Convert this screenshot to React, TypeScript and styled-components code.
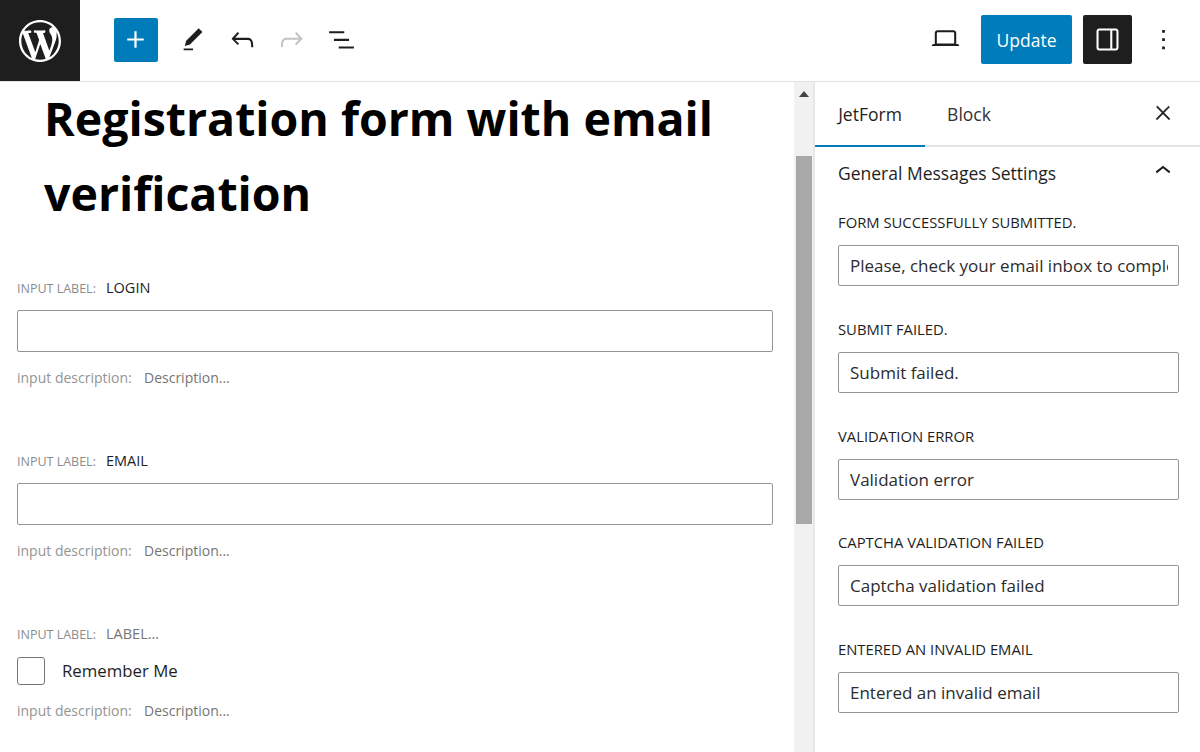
import React from "react";
import styled, { createGlobalStyle } from "styled-components";

const Global = createGlobalStyle`
  html, body { margin: 0; padding: 0; height: 100%; background: #fff; overflow: hidden; }
  #root { height: 100%; }
  * { box-sizing: border-box; }
`;

const FONT = `"Open Sans", "Noto Sans", sans-serif`;

const Page = styled.div`
  width: 1200px;
  height: 752px;
  display: flex;
  flex-direction: column;
  font-family: ${FONT};
  color: #1e1e1e;
  overflow: hidden;
`;
const TopBar = styled.header`
  height: 82px;
  flex: none;
  display: flex;
  align-items: flex-start;
  border-bottom: 1px solid #e3e3e3;
`;
const Logo = styled.div`
  width: 80px;
  height: 81px;
  background: #1e1e1e;
  display: flex;
  align-items: center;
  justify-content: center;
  flex: none;
`;
const ToolGroup = styled.div`
  display: flex;
  align-items: center;
  height: 81px;
  padding-left: 34px;
  gap: 5.6px;
`;
const AddButton = styled.div`
  width: 44px;
  height: 44px;
  margin-top: -2px;
  margin-right: 7px;
  background: #007cba;
  border-radius: 2px;
  display: flex;
  align-items: center;
  justify-content: center;
  padding-right: 2px;
`;
const ToolIcon = styled.div`
  width: 44px;
  height: 44px;
  margin-top: -2px;
  display: flex;
  align-items: center;
  justify-content: center;
`;
const Actions = styled.div`
  margin-left: auto;
  height: 79px;
  display: flex;
  align-items: center;
  padding-right: 15px;
`;
const UpdateButton = styled.div`
  width: 91px;
  height: 49px;
  margin-left: 14px;
  background: #007cba;
  color: #fff;
  border-radius: 2px;
  font-size: 17.5px;
  display: flex;
  align-items: center;
  justify-content: center;
`;
const SidebarToggle = styled.div`
  width: 49px;
  height: 49px;
  margin-left: 11px;
  background: #1e1e1e;
  border-radius: 2px;
  display: flex;
  align-items: center;
  justify-content: center;
`;
const MoreButton = styled.div`
  width: 44px;
  height: 44px;
  margin-left: 9px;
  display: flex;
  align-items: center;
  justify-content: center;
`;
const Body = styled.div`
  flex: 1;
  min-height: 0;
  display: flex;
`;
const Canvas = styled.main`
  width: 794px;
  flex: none;
  padding: 0 21px 0 17px;
`;
const Title = styled.h1`
  margin: -1px 0 47px 27px;
  font-size: 46.5px;
  font-weight: 700;
  line-height: 75px;
  color: #000;
  height: 150px;
  white-space: nowrap;
`;
const FormField = styled.section`
  height: 173px;
`;
const LabelRow = styled.div`
  display: flex;
  align-items: baseline;
  height: 32px;
  line-height: 20px;
`;
const MetaLabel = styled.span`
  width: 89px;
  font-size: 12.5px;
  color: #8c8c8c;
  text-transform: uppercase;
  white-space: nowrap;
`;
const FieldName = styled.span<{ $muted?: boolean }>`
  font-size: 14.5px;
  color: ${(p) => (p.$muted ? "#757575" : "#1e1e1e")};
  text-transform: uppercase;
`;
const InputBox = styled.input`
  display: block;
  width: 100%;
  height: 42px;
  border: 1px solid #949494;
  border-radius: 2px;
  background: #fff;
  outline: none;
`;
const DescRow = styled.div`
  margin-top: 16px;
  display: flex;
  align-items: baseline;
  font-size: 14px;
  line-height: 20px;
`;
const DescLabel = styled.span`
  width: 127px;
  color: #949494;
  white-space: nowrap;
`;
const DescValue = styled.span`
  color: #757575;
`;
const CheckRow = styled.div`
  display: flex;
  align-items: center;
  height: 28px;
  margin-top: 1px;
`;
const CheckBox = styled.div`
  width: 28px;
  height: 28px;
  border: 1px solid #757575;
  border-radius: 3px;
  flex: none;
`;
const CheckText = styled.span`
  margin-left: 17px;
  font-size: 16.8px;
  padding-bottom: 2px;
`;
const ScrollTrack = styled.div`
  width: 21px;
  flex: none;
  background: #f1f1f1;
  border-right: 2px solid #e8e8e8;
  padding: 0 1px 0 2px;
  display: flex;
  flex-direction: column;
  align-items: stretch;
`;
const ScrollArrow = styled.div`
  height: 74px;
  padding-top: 9px;
  display: flex;
  justify-content: center;
`;
const ScrollThumb = styled.div`
  height: 368px;
  background: #a8a8a8;
`;
const Sidebar = styled.aside`
  flex: 1;
  min-width: 0;
`;
const Tabs = styled.div`
  height: 65px;
  display: flex;
  align-items: stretch;
  border-bottom: 2px solid #e5e5e5;
`;
const Tab = styled.div<{ $active?: boolean; $width: number }>`
  width: ${(p) => p.$width}px;
  height: 65px;
  display: flex;
  align-items: center;
  justify-content: center;
  font-size: 17.5px;
  color: ${(p) => (p.$active ? "#1e1e1e" : "#333")};
  border-bottom: 2px solid ${(p) => (p.$active ? "#007cba" : "transparent")};
`;
const CloseButton = styled.div`
  margin-left: auto;
  width: 44px;
  margin-right: 15px;
  display: flex;
  align-items: center;
  justify-content: center;
  padding-bottom: 1px;
  color: #1e1e1e;
`;
const PanelHeader = styled.div`
  height: 54px;
  padding: 0 21px 2px 23px;
  display: flex;
  align-items: center;
  justify-content: space-between;
  font-size: 17.5px;
  font-weight: 500;
`;
const ChevronBox = styled.div`
  display: flex;
  margin-bottom: 4px;
`;
const PanelBody = styled.div`
  padding: 9px 21px 0 23px;
`;
const SettingField = styled.div`
  height: 106.8px;
`;
const SettingLabel = styled.div`
  font-size: 14.8px;
  font-weight: 500;
  line-height: 20px;
  height: 35px;
  padding-top: 2px;
  text-transform: uppercase;
  white-space: nowrap;
`;
const SettingInput = styled.input`
  display: block;
  width: 100%;
  height: 41px;
  border: 1px solid #949494;
  border-radius: 2px;
  padding: 0 10px 0 11px;
  font-family: ${FONT};
  font-size: 17px;
  color: #2c2c2c;
  background: #fff;
  outline: none;
`;

const Icon = ({ d, size = 33, color = "#1e1e1e", weight = 0 }: { d: string; size?: number; color?: string; weight?: number }) => (
  <svg width={size} height={size} viewBox="0 0 24 24" fill={color} stroke={weight ? color : "none"} strokeWidth={weight} aria-hidden="true">
    <path d={d} />
  </svg>
);

const P = {
  plus: "M18 11.2h-5.2V6h-1.6v5.2H6v1.6h5.2V18h1.6v-5.2H18z",
  edit: "M20.1 5.1L16.9 2 6.2 12.7l-1.3 4.4 4.5-1.3L20.1 5.1zM4 20.8h8v-1.5H4v1.5z",
  undo: "M18.3 11.7c-.6-.6-1.4-.9-2.3-.9H6.7l2.9-3.3-1.1-1-4.5 5L8.5 16l1-1-2.7-2.7H16c.5 0 .9.2 1.3.5 1 1 1 3.4 1 4.5v.3h1.5v-.2c0-1.5 0-4.3-1.5-5.7z",
  redo: "M15.6 6.5l-1.1 1 2.9 3.3H8c-.9 0-1.7.3-2.3.9-1.4 1.5-1.4 4.2-1.4 5.6v.2h1.5v-.3c0-1.1 0-3.5 1-4.5.3-.3.7-.5 1.3-.5h9.2L14.5 15l1.1 1.1 4.6-4.6-4.6-5z",
  list: "M3 6h11v1.5H3V6zm3.5 5.5h11V13h-11v-1.5zM10 17h11v1.5H10V17z",
  laptop: "M20.5 16h-.7V8c0-1.1-.9-2-2-2H6.2c-1.1 0-2 .9-2 2v8h-.7c-.8 0-1.5.7-1.5 1.5h20c0-.8-.7-1.5-1.5-1.5zM5.7 8c0-.3.2-.5.5-.5h11.6c.3 0 .5.2.5.5v7.6H5.7V8z",
  sidebar: "M18 4H6c-1.1 0-2 .9-2 2v12c0 1.1.9 2 2 2h12c1.1 0 2-.9 2-2V6c0-1.1-.9-2-2-2zm-4 14.5H6c-.3 0-.5-.2-.5-.5V6c0-.3.2-.5.5-.5h8v13zm4.5-.5c0 .3-.2.5-.5.5h-2.5v-13H18c.3 0 .5.2.5.5v12z",
  more: "M13 19h-2v-2h2v2zm0-6h-2v-2h2v2zm0-6h-2V5h2v2z",
  close: "M13 11.8l6.1-6.3-1-1-6.1 6.2-6.1-6.3-1 1 6.1 6.3-6.5 6.7 1 1 6.5-6.6 6.5 6.6 1-1z",
  chevronUp: "M6.5 12.4L12 8l5.5 4.4-.9 1.2L12 10l-4.5 3.6-1-1.2z",
};

const WP_LOGO =
  "M20 10c0-5.51-4.49-10-10-10C4.48 0 0 4.49 0 10c0 5.52 4.48 10 10 10 5.51 0 10-4.48 10-10zM7.78 15.37L4.37 6.22c.55-.02 1.17-.08 1.17-.08.5-.06.44-1.13-.06-1.11 0 0-1.45.11-2.37.11-.18 0-.37 0-.58-.01C4.12 2.69 6.87 1.11 10 1.11c2.33 0 4.45.87 6.05 2.34-.68-.11-1.65.39-1.65 1.58 0 .74.45 1.36.9 2.1.35.61.55 1.36.55 2.46 0 1.49-1.4 5-1.4 5l-3.03-8.37c.54-.02.82-.17.82-.17.5-.05.44-1.25-.06-1.22 0 0-1.44.12-2.38.12-.87 0-2.33-.12-2.33-.12-.5-.03-.56 1.2-.06 1.22l.92.08 1.26 3.41zM17.41 10c.24-.64.74-1.87.43-4.25.7 1.29 1.05 2.71 1.05 4.25 0 3.29-1.73 6.24-4.4 7.78.97-2.59 1.94-5.2 2.92-7.78zM6.1 18.09C3.12 16.65 1.11 13.53 1.11 10c0-1.3.23-2.48.72-3.59C3.25 10.3 4.67 14.2 6.1 18.09zm4.03-6.63l2.58 6.98c-.86.29-1.76.45-2.71.45-.79 0-1.57-.11-2.29-.33.81-2.38 1.62-4.74 2.42-7.1z";

const fields = ["Login", "Email"];

const settings = [
  ["Form successfully submitted.", "Please, check your email inbox to complete registration"],
  ["Submit failed.", "Submit failed."],
  ["Validation error", "Validation error"],
  ["Captcha validation failed", "Captcha validation failed"],
  ["Entered an invalid email", "Entered an invalid email"],
];

export default function App() {
  return (
    <Page>
      <Global />
      <TopBar>
        <Logo>
          <svg width="42" height="42" viewBox="0 0 20 20" fill="#fff" aria-hidden="true">
            <path d={WP_LOGO} />
          </svg>
        </Logo>
        <ToolGroup>
          <AddButton><Icon d={P.plus} color="#fff" /></AddButton>
          <ToolIcon><Icon d={P.edit} size={28} /></ToolIcon>
          <ToolIcon><Icon d={P.undo} /></ToolIcon>
          <ToolIcon><Icon d={P.redo} color="#c4c4c4" /></ToolIcon>
          <ToolIcon><Icon d={P.list} /></ToolIcon>
        </ToolGroup>
        <Actions>
          <ToolIcon><Icon d={P.laptop} /></ToolIcon>
          <UpdateButton>Update</UpdateButton>
          <SidebarToggle><Icon d={P.sidebar} color="#fff" /></SidebarToggle>
          <MoreButton><Icon d={P.more} /></MoreButton>
        </Actions>
      </TopBar>
      <Body>
        <Canvas>
          <Title>
            Registration form with email
            <br />
            verification
          </Title>
          {fields.map((name) => (
            <FormField key={name}>
              <LabelRow>
                <MetaLabel>Input label:</MetaLabel>
                <FieldName>{name}</FieldName>
              </LabelRow>
              <InputBox readOnly />
              <DescRow>
                <DescLabel>input description:</DescLabel>
                <DescValue>Description...</DescValue>
              </DescRow>
            </FormField>
          ))}
          <FormField>
            <LabelRow>
              <MetaLabel>Input label:</MetaLabel>
              <FieldName $muted>Label...</FieldName>
            </LabelRow>
            <CheckRow>
              <CheckBox />
              <CheckText>Remember Me</CheckText>
            </CheckRow>
            <DescRow>
              <DescLabel>input description:</DescLabel>
              <DescValue>Description...</DescValue>
            </DescRow>
          </FormField>
        </Canvas>
        <ScrollTrack>
          <ScrollArrow>
            <svg width="10" height="6" viewBox="0 0 10 6" fill="#444" aria-hidden="true">
              <path d="M5 0l5 6H0z" />
            </svg>
          </ScrollArrow>
          <ScrollThumb />
        </ScrollTrack>
        <Sidebar>
          <Tabs>
            <Tab $active $width={110}>JetForm</Tab>
            <Tab $width={88}>Block</Tab>
            <CloseButton><Icon d={P.close} size={22} weight={0.7} /></CloseButton>
          </Tabs>
          <PanelHeader>
            General Messages Settings
            <ChevronBox><Icon d={P.chevronUp} size={32} /></ChevronBox>
          </PanelHeader>
          <PanelBody>
            {settings.map(([label, value]) => (
              <SettingField key={label}>
                <SettingLabel>{label}</SettingLabel>
                <SettingInput readOnly value={value} />
              </SettingField>
            ))}
          </PanelBody>
        </Sidebar>
      </Body>
    </Page>
  );
}
